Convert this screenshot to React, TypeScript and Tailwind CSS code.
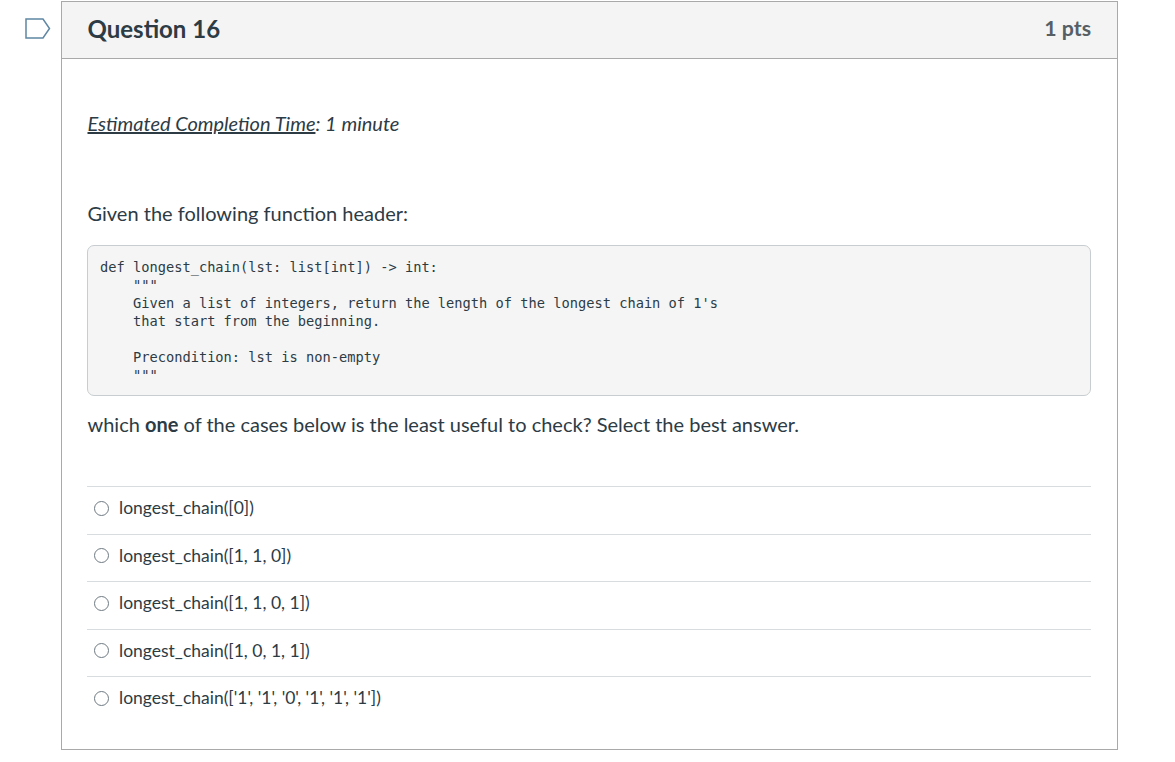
const lines = ["def longest_chain(lst: list[int]) -> int:", '    """', "    Given a list of integers, return the length of the longest chain of 1's", "    that start from the beginning.", "", "    Precondition: lst is non-empty", '    """'];
const options = ["longest_chain([0])", "longest_chain([1, 1, 0])", "longest_chain([1, 1, 0, 1])", "longest_chain([1, 0, 1, 1])", "longest_chain(['1', '1', '0', '1', '1', '1'])"];

export default function App() {
  return (
    <div className="flex items-start bg-white pl-[25px] pt-px font-['Lato','Noto_Sans',sans-serif] text-[#2d3b45]" style={{ minHeight: 762 }}>
      <svg width="26" height="21" viewBox="0 0 26 21" className="mt-[17px] mr-[10px] shrink-0">
        <path d="M1 1H18L24.5 10.5L18 20H1Z" fill="none" stroke="#5f87a3" strokeWidth="1.5" />
      </svg>
      <div className="flex h-[749px] w-[1057px] flex-col border border-[#a9a9a9]">
        <div className="flex h-[57px] shrink-0 items-center justify-between border-b border-[#a9a9a9] bg-[#f4f4f4] pb-[3px] pl-[25.5px] pr-[26px]">
          <h2 className="text-[24px] font-bold">Question 16</h2>
          <span className="text-[21.3px] font-bold text-[#565f66]">1 pts</span>
        </div>
        <div className="flex-1 pl-[25px] pr-[26px]">
          <p className="mt-[50px] pl-[0.5px] text-[20px] leading-[28px] italic"><span className="underline">Estimated Completion Time</span>: 1 minute</p>
          <p className="mt-[62px] pl-[0.5px] text-[20px] leading-[28px]">Given the following function header:</p>
          <pre className="mt-[18px] h-[151px] rounded-[7px] border border-[#c7cdd1] bg-[#f5f5f5] px-3 pt-[12px] font-['DejaVu_Sans_Mono',monospace] text-[13.7px] leading-[18px] text-[#2d3b45]">
            {lines.join("\n")}
          </pre>
          <p className="mt-[14px] pl-[0.5px] text-[20px] leading-[28px]">which <strong>one</strong> of the cases below is the least useful to check? Select the best answer.</p>
          <div className="mt-[48px]">
            {options.map((o) => (
              <div key={o} className="flex h-[47.5px] items-center border-t border-[#d9dcde] pb-[4px] pl-[7px]">
                <span className="mr-[10px] size-[15px] rounded-full border-[1.5px] border-[#6e7a82]" />
                <span className="text-[17.5px]">{o}</span>
              </div>
            ))}
          </div>
        </div>
      </div>
    </div>
  );
}
